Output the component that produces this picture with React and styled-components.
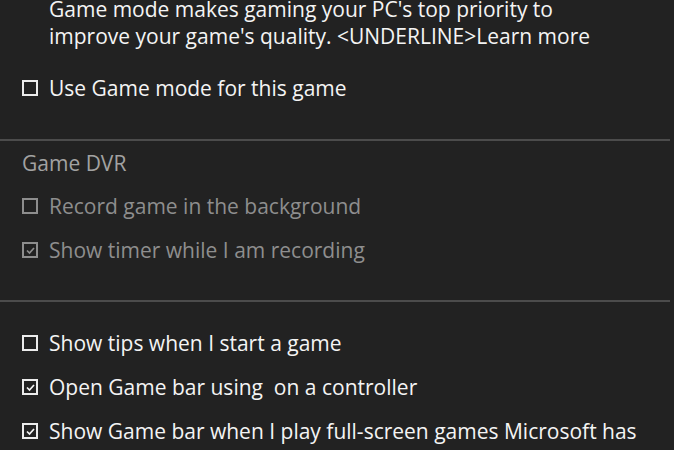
import styled, { createGlobalStyle } from "styled-components";

const GlobalStyle = createGlobalStyle`
    html, body {
        margin: 0;
        padding: 0;
        background: #222222;
    }
    body {
        font-family: "Open Sans", "Noto Sans", sans-serif;
        overflow: hidden;
    }
`;

const generalOptions = [
    { label: "Show tips when I start a game", checked: false },
    { label: "Open Game bar using  on a controller", checked: true },
    { label: "Show Game bar when I play full-screen games Microsoft has", checked: true },
];

export default function App() {
    return (
        <Page>
            <GlobalStyle />
            <Section $top={0} $bottom={29}>
                <Description>
                    Game mode makes gaming your PC's top priority to<br />
                    improve your game's quality. &lt;UNDERLINE&gt;Learn more
                </Description>
                <Option label="Use Game mode for this game" />
            </Section>
            <Divider />
            <Section $top={8} $bottom={28}>
                <Heading>Game DVR</Heading>
                <Option label="Record game in the background" disabled />
                <Option label="Show timer while I am recording" checked disabled />
            </Section>
            <Divider />
            <Section $top={19} $bottom={0}>
                {generalOptions.map(o => (
                    <Option key={o.label} label={o.label} checked={o.checked} />
                ))}
            </Section>
        </Page>
    );
}

function Option({ label, checked, disabled }) {
    return (
        <Row $disabled={disabled}>
            <Box $disabled={disabled}>
                {checked ? (
                    <svg width="11" height="11" viewBox="0 0 11 11">
                        <path d="M2 5.5 L4.5 8 L9 3" fill="none" stroke="currentColor" strokeWidth="1.7" />
                    </svg>
                ) : null}
            </Box>
            <span>{label.replace("  ", "\u00a0\u00a0")}</span>
        </Row>
    );
}

const Page = styled.div`
    width: 674px;
    height: 450px;
    background: #222222;
    display: flex;
    flex-direction: column;
    overflow: hidden;
`;

const Section = styled.div`
    display: flex;
    flex-direction: column;
    flex-shrink: 0;
    padding: ${p => p.$top}px 0 ${p => p.$bottom}px 22px;
`;

const Description = styled.p`
    margin: -4px 0 16px 27px;
    color: #f4f4f4;
    font-size: 21px;
    line-height: 27px;
    white-space: nowrap;
`;

const Heading = styled.div`
    color: #a2a2a2;
    font-size: 21px;
    line-height: 28px;
    margin-bottom: 7px;
`;

const Row = styled.div`
    display: flex;
    align-items: center;
    gap: 11px;
    height: 44px;
    color: ${p => (p.$disabled ? "#8e8e8e" : "#f4f4f4")};
    font-size: 21px;
    white-space: nowrap;
`;

const Box = styled.span`
    width: 12px;
    height: 12px;
    border: 2px solid ${p => (p.$disabled ? "#8e8e8e" : "#ececec")};
    display: flex;
    align-items: center;
    justify-content: center;
    flex-shrink: 0;
`;

const Divider = styled.div`
    width: 670px;
    height: 2px;
    flex-shrink: 0;
    background: #4c4c4c;
`;
